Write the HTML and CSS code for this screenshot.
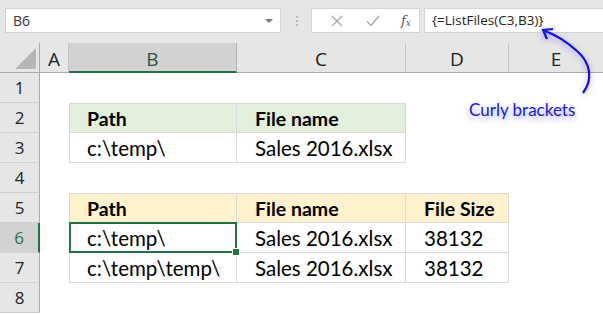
FILE: index.html
```html
<!DOCTYPE html>
<html lang="en">
<head>
    <meta charset="UTF-8">
    <link rel="stylesheet" href="styles.css">
</head>
<body>
    <div class="toolbar">
        <div class="namebox">
            <span>B6</span>
            <span class="caret"></span>
        </div>
        <div class="grip"><i></i><i></i><i></i></div>
        <div class="fxbox">
            <svg class="btn" width="12" height="12" viewBox="0 0 12 12">
                <path d="M1 1 L11 11 M11 1 L1 11" stroke="#a6a6a6" stroke-width="1.3" fill="none"/>
            </svg>
            <svg class="btn" width="14" height="12" viewBox="0 0 14 12">
                <path d="M1 6.5 L5 10.5 L13 1" stroke="#a6a6a6" stroke-width="1.3" fill="none"/>
            </svg>
            <span class="fx">f<sub>x</sub></span>
        </div>
        <div class="formula">{=ListFiles(C3,B3)}</div>
    </div>

    <div class="sheet">
        <div class="corner"><span class="tri"></span></div>
        <div class="colhead">A</div>
        <div class="colhead sel">B</div>
        <div class="colhead">C</div>
        <div class="colhead">D</div>
        <div class="colhead last">E</div>

        <div class="rowhead">1</div>
        <div></div><div></div><div></div><div></div><div></div>

        <div class="rowhead">2</div>
        <div></div>
        <div class="tc top green first bold">Path</div>
        <div class="tc top green end bold">File name</div>
        <div></div><div></div>

        <div class="rowhead">3</div>
        <div></div>
        <div class="tc first">c:\temp\</div>
        <div class="tc end">Sales 2016.xlsx</div>
        <div></div><div></div>

        <div class="rowhead">4</div>
        <div></div><div></div><div></div><div></div><div></div>

        <div class="rowhead">5</div>
        <div></div>
        <div class="tc top yellow first bold">Path</div>
        <div class="tc top yellow bold">File name</div>
        <div class="tc top yellow end bold">File Size</div>
        <div></div>

        <div class="rowhead sel">6</div>
        <div></div>
        <div class="tc first active">c:\temp\</div>
        <div class="tc">Sales 2016.xlsx</div>
        <div class="tc end">38132</div>
        <div></div>

        <div class="rowhead">7</div>
        <div></div>
        <div class="tc first">c:\temp\temp\</div>
        <div class="tc">Sales 2016.xlsx</div>
        <div class="tc end">38132</div>
        <div></div>

        <div class="rowhead">8</div>
        <div></div><div></div><div></div><div></div><div></div>
    </div>

    <!-- callout pointing at the closing bracket -->
    <svg class="arrow" width="603" height="120" viewBox="0 0 603 120">
        <path d="M583 93 C593 80 591 63 577 51 C567 42 556 35 545 31" stroke="#1010d8" stroke-width="2.2" fill="none"/>
        <path d="M553 29 L543 30 L547 39" stroke="#1010d8" stroke-width="2.2" fill="none"/>
    </svg>
    <div class="note">Curly brackets</div>
</body>
</html>
```

FILE: styles.css
```css
* {
    margin: 0;
    padding: 0;
    box-sizing: border-box;
}

body {
    width: 603px;
    height: 314px;
    overflow: hidden;
    background: #ffffff;
    font-family: "Open Sans", "Noto Sans", sans-serif;
    position: relative;
}

/* formula bar */
.toolbar {
    display: flex;
    align-items: flex-start;
    height: 43px;
    padding-top: 8px;
    background: #e6e6e6;
}

.namebox {
    display: flex;
    align-items: center;
    justify-content: space-between;
    margin-left: 5px;
    width: 276px;
    height: 25px;
    padding: 0 7px 0 7px;
    background: #fff;
    border: 1px solid #d4d4d4;
    font-size: 14px;
    color: #333;
}

.caret {
    width: 0;
    height: 0;
    border-left: 4px solid transparent;
    border-right: 4px solid transparent;
    border-top: 4px solid #7a7a7a;
}

.grip {
    width: 30px;
    height: 25px;
    display: flex;
    flex-direction: column;
    align-items: center;
    justify-content: center;
    gap: 2px;
    padding-left: 2px;
}

.grip i {
    display: block;
    width: 2px;
    height: 2px;
    background: #b8b8b8;
}

.fxbox {
    display: flex;
    align-items: center;
    width: 109px;
    height: 25px;
    background: #fff;
    border: 1px solid #d4d4d4;
    padding-left: 19px;
}

.fxbox .btn {
    margin-right: 23px;
}

.fxbox .btn + .btn {
    margin-right: 21px;
}

.fx {
    font-family: "DejaVu Serif", serif;
    font-style: italic;
    font-size: 13px;
    color: #555;
}

.fx sub {
    font-size: 9px;
    vertical-align: -1px;
}

.formula {
    flex: 1;
    height: 25px;
    margin-left: 4px;
    background: #fff;
    border: 1px solid #d4d4d4;
    border-right: none;
    padding-left: 7px;
    font-size: 13.5px;
    line-height: 23px;
    color: #222;
}

/* grid */
.sheet {
    display: grid;
    grid-template-columns: 40px 29px 168px 169px 103px 1fr;
    grid-template-rows: 30px repeat(8, 30px);
}

.corner {
    background: #e6e6e6;
    border-right: 1px solid #ababab;
    border-bottom: 1px solid #ababab;
    display: flex;
    align-items: flex-end;
    justify-content: flex-end;
    padding: 0 3px 3px 0;
}

.tri {
    width: 0;
    height: 0;
    border-left: 21px solid transparent;
    border-bottom: 21px solid #b6b6b6;
}

.colhead {
    background: #e6e6e6;
    border-bottom: 1px solid #ababab;
    border-right: 1px solid #c6c6c6;
    display: flex;
    align-items: center;
    justify-content: center;
    font-size: 19px;
    color: #222;
    padding-top: 3px;
}

.colhead.sel {
    background: #d2d2d2;
    color: #1f5c3c;
    border-bottom: 2px solid #217346;
    border-right-color: #b4b4b4;
}

.colhead.last {
    border-right: none;
}

.rowhead {
    background: #e6e6e6;
    border-right: 1px solid #ababab;
    border-bottom: 1px solid #d0d0d0;
    display: flex;
    align-items: center;
    justify-content: center;
    font-size: 17px;
    color: #222;
}

.rowhead.sel {
    background: #d2d2d2;
    color: #2e6e4c;
    border-right: 2px solid #217346;
}

/* table cells */
.tc {
    display: flex;
    align-items: center;
    padding-left: 18px;
    font-family: "Lato", "Liberation Sans", sans-serif;
    font-size: 20.5px;
    color: #000;
    border-bottom: 1px solid #d9d9d9;
    border-right: 1px solid #d9d9d9;
    position: relative;
}

.tc.first {
    border-left: 1px solid #d9d9d9;
    padding-left: 17px;
}

.tc.top {
    border-top: 1px solid #d9d9d9;
}

.tc.bold {
    font-weight: bold;
    font-size: 19.5px;
}

.green {
    background: #e2efda;
}

.yellow {
    background: #fff2cc;
}

.tc.active::after {
    content: "";
    position: absolute;
    left: -1px;
    top: -1px;
    right: -1px;
    bottom: -1px;
    border: 2px solid #217346;
}

.tc.active::before {
    content: "";
    position: absolute;
    right: -4px;
    bottom: -4px;
    width: 6px;
    height: 6px;
    background: #217346;
    border: 1px solid #fff;
    z-index: 1;
}

/* callout */
.arrow {
    position: absolute;
    left: 0;
    top: 0;
    filter: drop-shadow(0 2px 3px rgba(30, 30, 255, 0.45));
}

.note {
    position: absolute;
    left: 469px;
    top: 99px;
    font-family: "Lato", "Liberation Sans", sans-serif;
    font-size: 17px;
    color: #1a1ad0;
    text-shadow: 0 3px 6px rgba(40, 40, 255, 0.45);
}
```
